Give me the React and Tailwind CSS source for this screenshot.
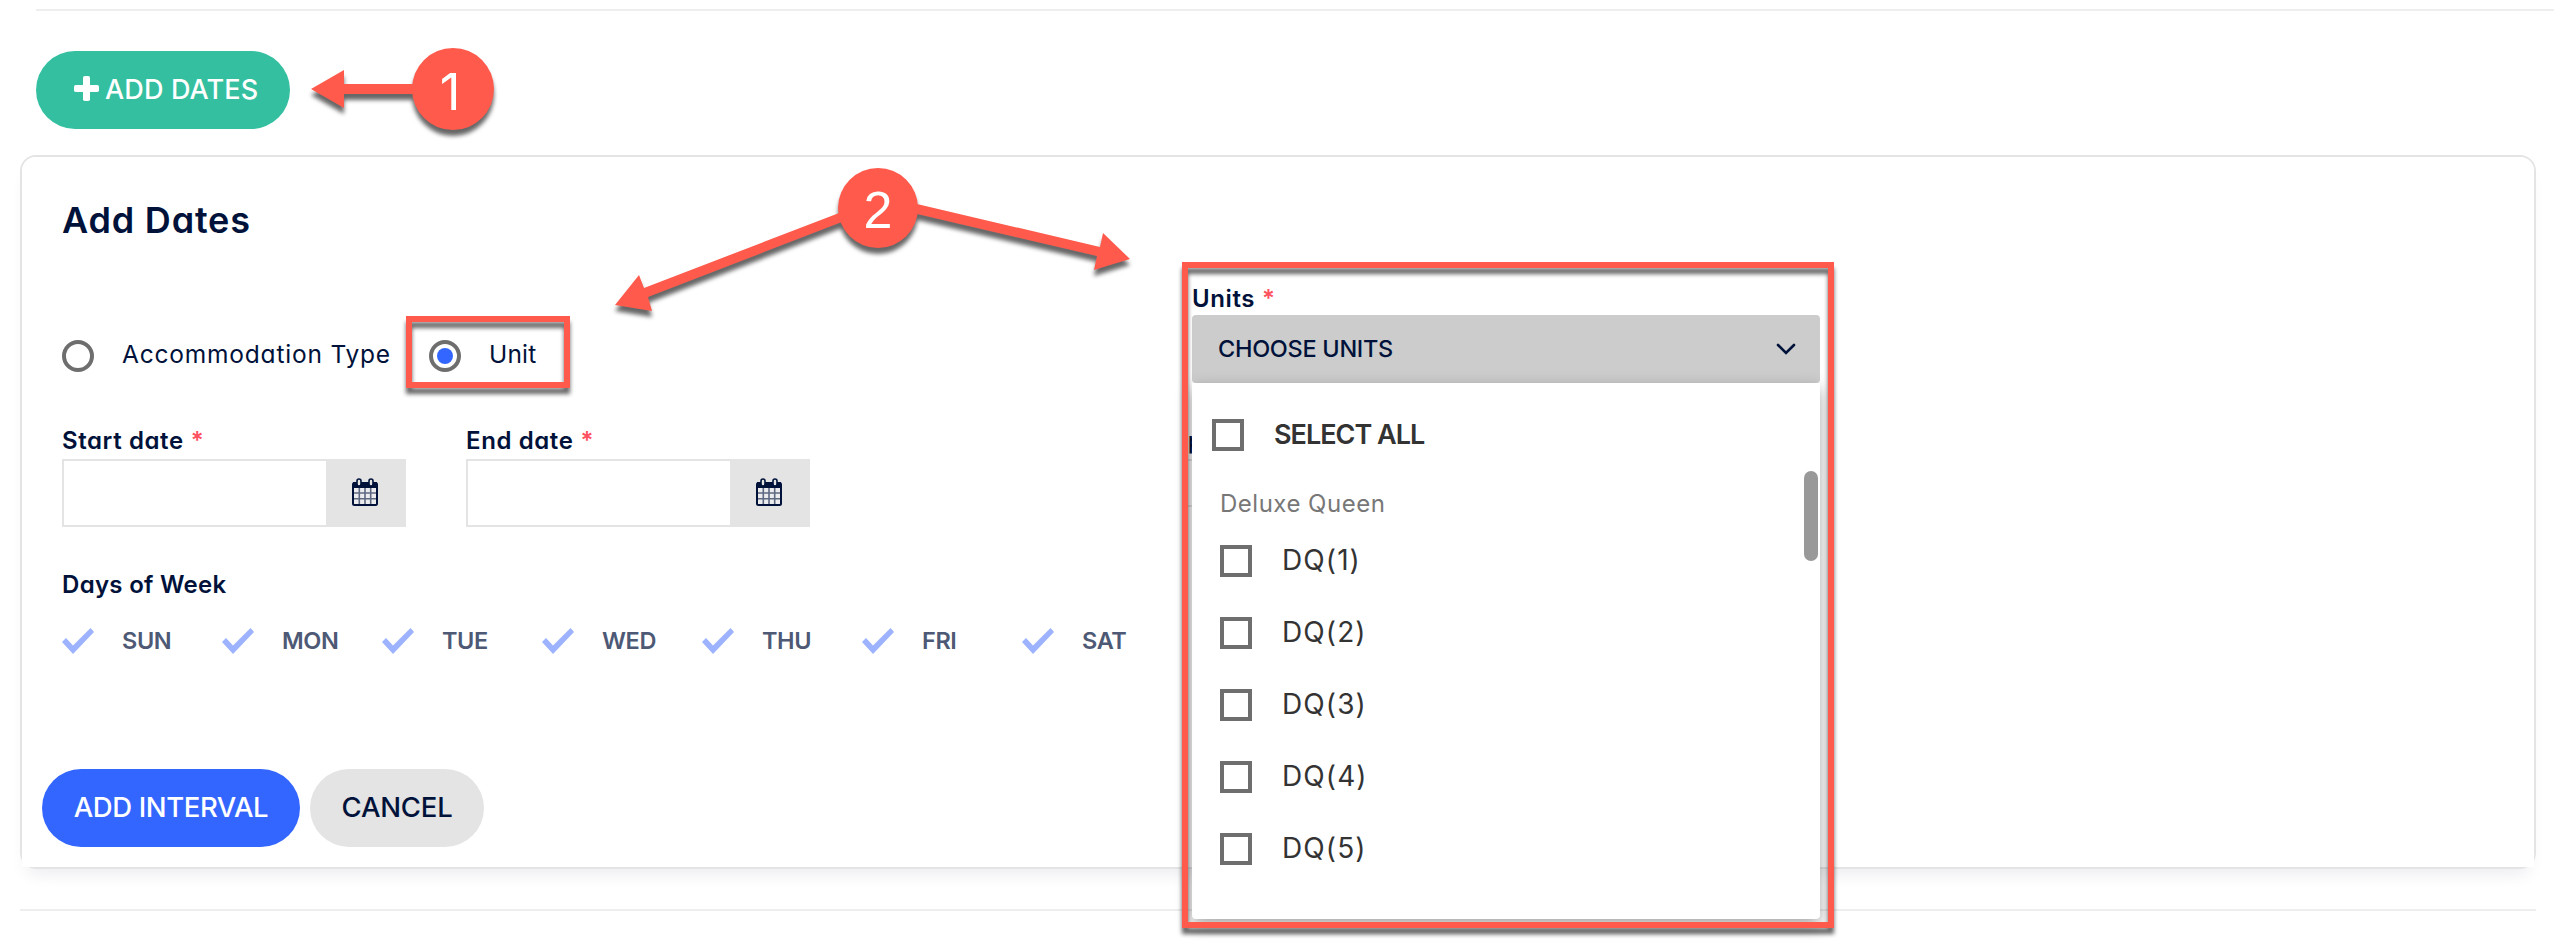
const days = ["SUN", "MON", "TUE", "WED", "THU", "FRI", "SAT"];
const units = ["DQ(1)", "DQ(2)", "DQ(3)", "DQ(4)", "DQ(5)"];

const Calendar = () => (
  <svg width="26" height="28" viewBox="0 0 26 28" className="-mt-[2px]">
    <rect x="1" y="5" width="24" height="22" rx="1.5" fill="#ececee" stroke="#00123a" strokeWidth="2" />
    <path
      d="M7.3 10v16M13 10v16M18.7 10v16M2 15h22M2 20.7h22"
      stroke="#00123a"
      strokeOpacity="0.6"
      strokeWidth="1.6"
    />
    <rect x="1" y="4" width="24" height="6" fill="#00123a" />
    <rect x="5" y="1" width="4" height="7" rx="2" fill="#e4e4e4" stroke="#00123a" strokeWidth="1.6" />
    <rect x="17" y="1" width="4" height="7" rx="2" fill="#e4e4e4" stroke="#00123a" strokeWidth="1.6" />
  </svg>
);

const Label = ({ children }) => (
  <div className="h-8 flex items-start gap-[7px] text-[24px] leading-8 font-semibold whitespace-nowrap">
    <span className="tracking-[0.6px]">{children}</span>
    <span className="text-[#ff5260]">*</span>
  </div>
);

const DateField = ({ label }) => (
  <div className="w-[344px]">
    <Label>{label}</Label>
    <div className="h-[68px] mt-[2px] flex border-2 border-[#e4e4e4]">
      <div className="flex-1" />
      <div className="w-[78px] bg-[#e4e4e4] flex items-center justify-center">
        <Calendar />
      </div>
    </div>
  </div>
);

const Radio = ({ checked }) => (
  <span className="w-8 h-8 rounded-full border-4 border-[#6e6e6e] flex items-center justify-center">
    {checked && <span className="w-4 h-4 rounded-full bg-[#3366ff]" />}
  </span>
);

const Box = () => <span className="w-8 h-8 shrink-0 border-4 border-[#6e6e6e]" />;

const App = () => {
  return (
    <div className="relative w-[2554px] h-[952px] bg-white overflow-hidden text-[#00123a] font-[Inter,sans-serif] [font-feature-settings:'cv11']">
      <div className="ml-9 pt-[9px]">
        <div className="h-[2px] bg-[#eee]" />
        <button className="mt-10 w-[254px] h-[78px] pl-[38px] rounded-full bg-[#34c0a0] text-white flex items-center gap-[6px] text-[27px] font-medium tracking-[0.15px] whitespace-nowrap">
          <svg width="25" height="25" viewBox="0 0 25 25" className="shrink-0 -mt-[3px]" fill="white">
            <rect x="9" width="7" height="25" rx="1.8" />
            <rect y="9" width="25" height="7" rx="1.8" />
          </svg>
          <span>ADD DATES</span>
        </button>
      </div>

      <div className="mt-[26px] ml-5 w-[2516px] h-[714px] border-2 border-[#e4e4e4] rounded-2xl shadow-[0_12px_16px_-6px_#eeeef2]">
        <div className="h-full bg-white rounded-t-[14px]">
          <div className="pl-10">
            <h2 className="pt-[39px] h-[86px] text-[36px] leading-[48px] font-semibold tracking-[0.8px]">Add Dates</h2>

            <div className="mt-[97px] h-8 flex items-center text-[24.5px]">
              <Radio />
              <span className="w-[307px] ml-[28px] -mt-1 shrink-0 tracking-[0.8px]">Accommodation Type</span>
              <Radio checked />
              <span className="ml-[28px] -mt-1 tracking-[0.2px]">Unit</span>
            </div>

            <div className="mt-[53px] flex gap-[60px]">
              <DateField label="Start date" />
              <DateField label="End date" />
            </div>

            <p className="mt-[42px] text-[24px] leading-8 font-semibold tracking-[0.3px]">Days of Week</p>
            <div className="mt-6 flex">
              {days.map((day) => (
                <div key={day} className="w-40 h-8 flex items-center">
                  <svg width="32" height="26" viewBox="0 0 32 26">
                    <path d="M0 14L4 10L11 17.5L28.5 0L32 4L11 26Z" fill="#9db3ff" />
                  </svg>
                  <span className="ml-[28px] text-[23.5px] font-semibold tracking-[-0.4px] text-[#4d5975]">{day}</span>
                </div>
              ))}
            </div>
          </div>

          <div className="mt-[112px] ml-5 flex gap-[10px] text-[27.5px] font-medium">
            <button className="w-[258px] h-[78px] rounded-full bg-[#3366ff] text-white tracking-[-0.4px] whitespace-nowrap">
              ADD INTERVAL
            </button>
            <button className="w-[174px] h-[78px] rounded-full bg-[#e4e4e4] tracking-[-0.2px]">CANCEL</button>
          </div>
        </div>
      </div>
      <div className="mt-10 ml-5 w-[2516px] h-[2px] bg-[#eee]" />

      {/* field hidden behind the open dropdown */}
      <div className="absolute left-[1184px] top-[426px] w-[60px] h-[82px] overflow-hidden">
        <div className="-ml-[10px] h-[33px] text-[23.5px] leading-[30px] font-medium">ep</div>
        <div className="h-12 border-y-2 border-[#e4e4e4]" />
      </div>

      {/* units dropdown, open over the form */}
      <div className="absolute left-[1192px] top-[283px] w-[628px]">
        <Label>Units</Label>
        <div className="h-[68px] pl-[26px] pr-[24px] rounded bg-[#ccc] flex items-center justify-between text-[23.5px] font-medium">
          <span className="tracking-[-0.3px]">CHOOSE UNITS</span>
          <svg width="20" height="12" viewBox="0 0 20 12">
            <path d="M2 2L10 10L18 2" fill="none" stroke="#00123a" strokeWidth="2.6" strokeLinecap="round" />
          </svg>
        </div>
        <div className="h-[536px] pt-9 pl-5 rounded-b bg-white text-[#333] shadow-[0_6px_16px_rgba(0,0,0,0.36)] relative">
          <div className="h-8 flex items-center gap-[30px] text-[27px] font-semibold">
            <Box />
            <span className="tracking-[-1px]">SELECT ALL</span>
          </div>
          <p className="mt-[37px] ml-2 text-[24px] leading-8 tracking-[0.5px] text-[#777]">Deluxe Queen</p>
          <div className="mt-[25px] ml-2 flex flex-col gap-10">
            {units.map((unit) => (
              <div key={unit} className="h-8 flex items-center gap-[30px] text-[28px] tracking-[1.1px]">
                <Box />
                <span className="-mt-[2px]">{unit}</span>
              </div>
            ))}
          </div>
          <div className="absolute right-[2px] top-[88px] w-[14px] h-[90px] rounded-full bg-[#999]" />
        </div>
      </div>

      {/* callouts */}
      <div className="absolute left-[1182px] top-[262px] w-[652px] h-[666px] border-[6px] border-[#ff5a4c] [filter:drop-shadow(0_6px_2px_rgba(0,0,0,0.6))]" />
      <div className="absolute left-[406px] top-[316px] w-[164px] h-[72px] border-[6px] border-[#ff5a4c] [filter:drop-shadow(0_6px_2px_rgba(0,0,0,0.6))]" />
      <svg
        width="1200"
        height="340"
        viewBox="0 0 1200 340"
        className="absolute left-0 top-0 [filter:drop-shadow(0_6px_2px_rgba(0,0,0,0.6))]"
        fill="#ff5a4c"
      >
        <path d="M311 89L344 70V84H430V94H344V108Z" />
        <path d="M615 305L639 275L644 288L860 205V215L648 297L652 311Z" />
        <path d="M1130 259L1103 233L1100 247L900 200V210L1097 256L1094 270Z" />
        <circle cx="453" cy="89" r="41" />
        <circle cx="878" cy="208" r="40" />
      </svg>
      <span className="absolute left-[409px] top-[62px] w-[82px] text-center text-[51px] leading-[60px] text-white">1</span>
      <span className="absolute left-[837px] top-[180px] w-[82px] text-center text-[52px] leading-[60px] text-white font-['Liberation_Sans',sans-serif]">2</span>
    </div>
  );
};

export default App;
